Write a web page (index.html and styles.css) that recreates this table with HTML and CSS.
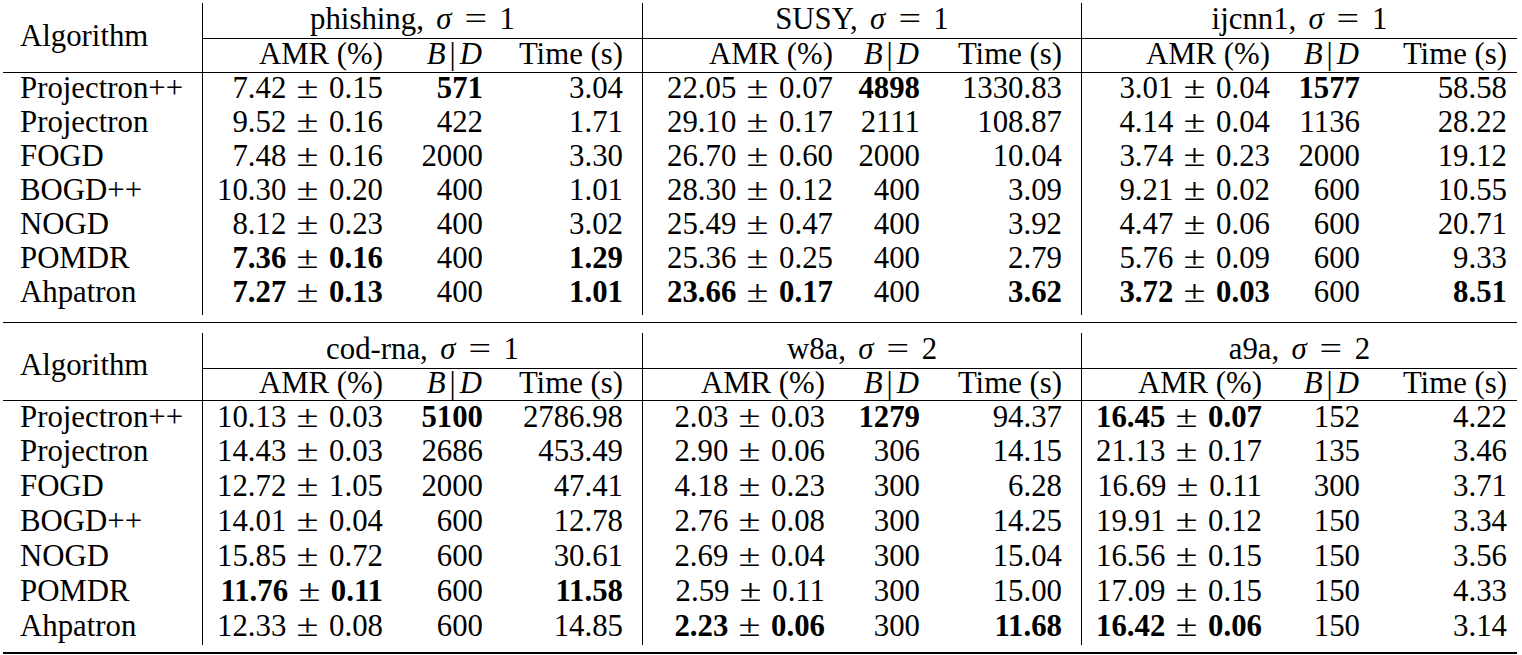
FILE: index.html
```html
<!DOCTYPE html>
<html>
<head>
<meta charset="utf-8">
<link rel="stylesheet" href="styles.css">
</head>
<body>
<div class="page">
  <div class="block first">
    <div class="tbl t1">
      <div class="c alg">Algorithm</div>
      <div class="c grp g sh">phishing,<span class="sp"></span><i>σ</i><span class="eq">=</span>1</div>
      <div class="c grp g">SUSY,<span class="sp"></span><i>σ</i><span class="eq">=</span>1</div>
      <div class="c grp g">ijcnn1,<span class="sp"></span><i>σ</i><span class="eq">=</span>1</div>
      <div class="c hd g">AMR (%)</div><div class="c hd"><i class="mi">B</i><span class="bar">|</span><i class="mi">D</i></div><div class="c hd t">Time (s)</div>
      <div class="c hd g">AMR (%)</div><div class="c hd"><i class="mi">B</i><span class="bar">|</span><i class="mi">D</i></div><div class="c hd t">Time (s)</div>
      <div class="c hd g">AMR (%)</div><div class="c hd"><i class="mi">B</i><span class="bar">|</span><i class="mi">D</i></div><div class="c hd t tl">Time (s)</div>

      <div class="c l">Projectron++</div>
      <div class="c g">7.42<span class="pm">±</span>0.15</div><div class="c"><b>571</b></div><div class="c t">3.04</div>
      <div class="c g">22.05<span class="pm">±</span>0.07</div><div class="c"><b>4898</b></div><div class="c t">1330.83</div>
      <div class="c g">3.01<span class="pm">±</span>0.04</div><div class="c"><b>1577</b></div><div class="c t tl">58.58</div>

      <div class="c l">Projectron</div>
      <div class="c g">9.52<span class="pm">±</span>0.16</div><div class="c">422</div><div class="c t">1.71</div>
      <div class="c g">29.10<span class="pm">±</span>0.17</div><div class="c">2111</div><div class="c t">108.87</div>
      <div class="c g">4.14<span class="pm">±</span>0.04</div><div class="c">1136</div><div class="c t tl">28.22</div>

      <div class="c l">FOGD</div>
      <div class="c g">7.48<span class="pm">±</span>0.16</div><div class="c">2000</div><div class="c t">3.30</div>
      <div class="c g">26.70<span class="pm">±</span>0.60</div><div class="c">2000</div><div class="c t">10.04</div>
      <div class="c g">3.74<span class="pm">±</span>0.23</div><div class="c">2000</div><div class="c t tl">19.12</div>

      <div class="c l">BOGD++</div>
      <div class="c g">10.30<span class="pm">±</span>0.20</div><div class="c">400</div><div class="c t">1.01</div>
      <div class="c g">28.30<span class="pm">±</span>0.12</div><div class="c">400</div><div class="c t">3.09</div>
      <div class="c g">9.21<span class="pm">±</span>0.02</div><div class="c">600</div><div class="c t tl">10.55</div>

      <div class="c l">NOGD</div>
      <div class="c g">8.12<span class="pm">±</span>0.23</div><div class="c">400</div><div class="c t">3.02</div>
      <div class="c g">25.49<span class="pm">±</span>0.47</div><div class="c">400</div><div class="c t">3.92</div>
      <div class="c g">4.47<span class="pm">±</span>0.06</div><div class="c">600</div><div class="c t tl">20.71</div>

      <div class="c l">POMDR</div>
      <div class="c g"><b>7.36</b><span class="pm">±</span><b>0.16</b></div><div class="c">400</div><div class="c t"><b>1.29</b></div>
      <div class="c g">25.36<span class="pm">±</span>0.25</div><div class="c">400</div><div class="c t">2.79</div>
      <div class="c g">5.76<span class="pm">±</span>0.09</div><div class="c">600</div><div class="c t tl">9.33</div>

      <div class="c l">Ahpatron</div>
      <div class="c g"><b>7.27</b><span class="pm">±</span><b>0.13</b></div><div class="c">400</div><div class="c t"><b>1.01</b></div>
      <div class="c g"><b>23.66</b><span class="pm">±</span><b>0.17</b></div><div class="c">400</div><div class="c t"><b>3.62</b></div>
      <div class="c g"><b>3.72</b><span class="pm">±</span><b>0.03</b></div><div class="c">600</div><div class="c t tl"><b>8.51</b></div>
    </div>
  </div>

  <div class="block second">
    <div class="tbl t2">
      <div class="c alg">Algorithm</div>
      <div class="c grp g">cod-rna,<span class="sp"></span><i>σ</i><span class="eq">=</span>1</div>
      <div class="c grp g">w8a,<span class="sp"></span><i>σ</i><span class="eq">=</span>2</div>
      <div class="c grp g">a9a,<span class="sp"></span><i>σ</i><span class="eq">=</span>2</div>
      <div class="c hd g">AMR (%)</div><div class="c hd"><i class="mi">B</i><span class="bar">|</span><i class="mi">D</i></div><div class="c hd t">Time (s)</div>
      <div class="c hd g">AMR (%)</div><div class="c hd"><i class="mi">B</i><span class="bar">|</span><i class="mi">D</i></div><div class="c hd t">Time (s)</div>
      <div class="c hd g">AMR (%)</div><div class="c hd"><i class="mi">B</i><span class="bar">|</span><i class="mi">D</i></div><div class="c hd t tl">Time (s)</div>

      <div class="c l">Projectron++</div>
      <div class="c g">10.13<span class="pm">±</span>0.03</div><div class="c"><b>5100</b></div><div class="c t">2786.98</div>
      <div class="c g">2.03<span class="pm">±</span>0.03</div><div class="c"><b>1279</b></div><div class="c t">94.37</div>
      <div class="c g"><b>16.45</b><span class="pm">±</span><b>0.07</b></div><div class="c">152</div><div class="c t tl">4.22</div>

      <div class="c l">Projectron</div>
      <div class="c g">14.43<span class="pm">±</span>0.03</div><div class="c">2686</div><div class="c t">453.49</div>
      <div class="c g">2.90<span class="pm">±</span>0.06</div><div class="c">306</div><div class="c t">14.15</div>
      <div class="c g">21.13<span class="pm">±</span>0.17</div><div class="c">135</div><div class="c t tl">3.46</div>

      <div class="c l">FOGD</div>
      <div class="c g">12.72<span class="pm">±</span>1.05</div><div class="c">2000</div><div class="c t">47.41</div>
      <div class="c g">4.18<span class="pm">±</span>0.23</div><div class="c">300</div><div class="c t">6.28</div>
      <div class="c g">16.69<span class="pm">±</span>0.11</div><div class="c">300</div><div class="c t tl">3.71</div>

      <div class="c l">BOGD++</div>
      <div class="c g">14.01<span class="pm">±</span>0.04</div><div class="c">600</div><div class="c t">12.78</div>
      <div class="c g">2.76<span class="pm">±</span>0.08</div><div class="c">300</div><div class="c t">14.25</div>
      <div class="c g">19.91<span class="pm">±</span>0.12</div><div class="c">150</div><div class="c t tl">3.34</div>

      <div class="c l">NOGD</div>
      <div class="c g">15.85<span class="pm">±</span>0.72</div><div class="c">600</div><div class="c t">30.61</div>
      <div class="c g">2.69<span class="pm">±</span>0.04</div><div class="c">300</div><div class="c t">15.04</div>
      <div class="c g">16.56<span class="pm">±</span>0.15</div><div class="c">150</div><div class="c t tl">3.56</div>

      <div class="c l">POMDR</div>
      <div class="c g"><b>11.76</b><span class="pm">±</span><b>0.11</b></div><div class="c">600</div><div class="c t"><b>11.58</b></div>
      <div class="c g">2.59<span class="pm">±</span>0.11</div><div class="c">300</div><div class="c t">15.00</div>
      <div class="c g">17.09<span class="pm">±</span>0.15</div><div class="c">150</div><div class="c t tl">4.33</div>

      <div class="c l">Ahpatron</div>
      <div class="c g">12.33<span class="pm">±</span>0.08</div><div class="c">600</div><div class="c t">14.85</div>
      <div class="c g"><b>2.23</b><span class="pm">±</span><b>0.06</b></div><div class="c">300</div><div class="c t"><b>11.68</b></div>
      <div class="c g"><b>16.42</b><span class="pm">±</span><b>0.06</b></div><div class="c">150</div><div class="c t tl">3.14</div>
    </div>
  </div>
</div>
</body>
</html>
```

FILE: styles.css
```css
html, body {
  margin: 0;
  padding: 0;
  background: #ffffff;
}

body {
  font-family: "Liberation Serif", "Times New Roman", serif;
  font-size: 30.8px;
  color: #000;
  width: 1522px;
  height: 655px;
  overflow: hidden;
}

.page {
  padding: 0 5px 0 3px;
}

.block.first {
  padding-top: 3px;
  padding-bottom: 7px;
  border-bottom: 1.5px solid #000;
}

.block.second {
  padding-top: 10px;
  padding-bottom: 7px;
  border-bottom: 2px solid #000;
}

.tbl {
  display: grid;
  grid-template-columns: 199px 181px 100px 159px 191px 87px 161px 189px 90px 157px;
}

.t1 {
  grid-template-rows: 36px 34px repeat(6, 34px) 38px;
}

.t1 > .c:nth-last-child(-n+10) {
  padding-bottom: 7px;
}

.t2 {
  grid-template-columns: 199px 181px 100px 159px 183px 95px 161px 181px 98px 157px;
  grid-template-rows: 36px 32px repeat(7, 34.85px);
}

.c {
  box-sizing: border-box;
  display: flex;
  align-items: center;
  justify-content: flex-end;
  line-height: 1;
  white-space: pre;
  padding-bottom: 3px;
}

.c.l {
  justify-content: flex-start;
  padding-left: 17px;
}

.c.alg {
  grid-row: span 2;
  justify-content: flex-start;
  padding-left: 17px;
  border-bottom: 1px solid #000;
}

.c.g {
  border-left: 1px solid #000;
}

.c.grp {
  grid-column: span 3;
  justify-content: center;
  border-bottom: 1px solid #000;
}

.c.grp.sh {
  padding-right: 20px;
}

.c.hd {
  border-bottom: 1px solid #000;
}

.c.t {
  padding-right: 19px;
}

.c.t.tl {
  padding-right: 10px;
}

.sp {
  display: inline-block;
  width: 0.4em;
}

.eq {
  display: inline-block;
  margin: 0 0.5em;
  transform: scaleX(1.3);
}

.pm {
  display: inline-block;
  margin: 0 0.42em;
  transform: scaleX(1.3);
}

.mi {
  display: inline-block;
  margin: 0 1px;
}

.bar {
  display: inline-block;
  padding: 0 3px;
}

b {
  font-weight: bold;
}
```
